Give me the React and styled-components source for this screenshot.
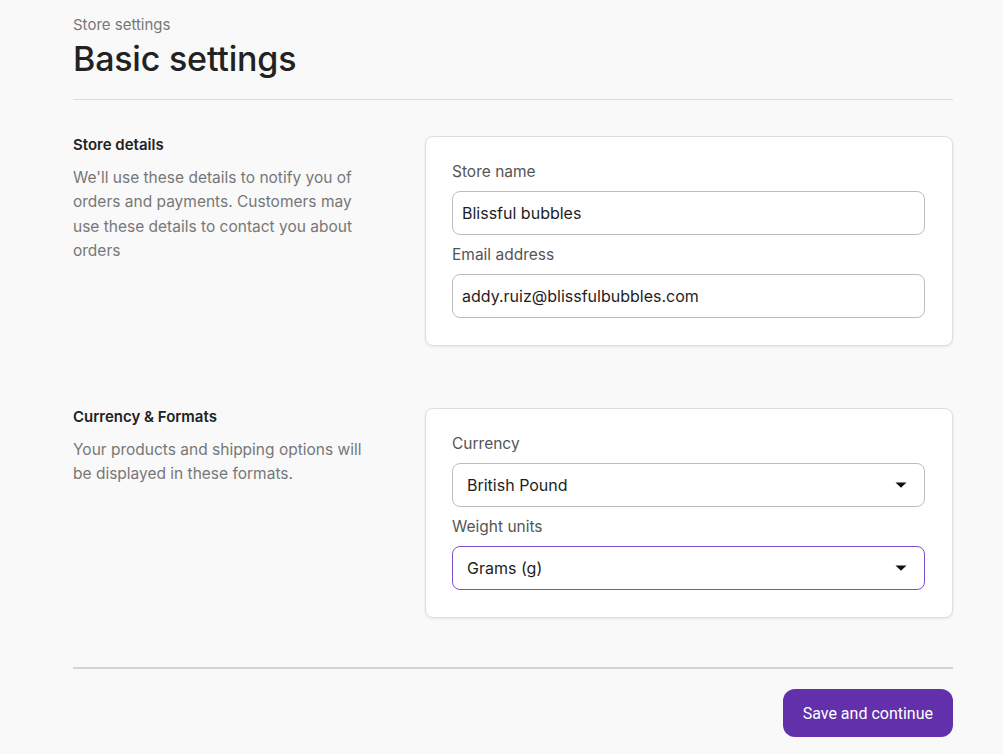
import React from "react";
import styled, { createGlobalStyle } from "styled-components";

const GlobalStyle = createGlobalStyle`
  html, body {
    margin: 0;
    padding: 0;
    background: #f9f9f9;
  }
  body {
    font-family: Inter, "Noto Sans", sans-serif;
    color: #222;
  }
  * { box-sizing: border-box; }
`;

const Page = styled.div`
  width: 880px;
  margin-left: 73px;
  padding-top: 15px;
  padding-bottom: 23px;
`;

const Eyebrow = styled.div`
  font-size: 15px;
  line-height: 20px;
  color: #777;
`;

const Title = styled.h1`
  margin: 2px 0 0;
  font-size: 34px;
  line-height: 44px;
  font-weight: 500;
  letter-spacing: -0.2px;
  color: #222;
`;

const Divider = styled.hr`
  margin: ${({ top }) => top}px 0 0;
  border: none;
  height: ${({ thick }) => (thick ? 2 : 1)}px;
  background: ${({ thick }) => (thick ? "#d4d4d4" : "#dcdcdc")};
`;

const Sections = styled.div`
  display: flex;
  flex-direction: column;
  gap: 62px;
  padding-top: 36px;
`;

const Section = styled.section`
  display: grid;
  grid-template-columns: 352px 1fr;
`;

const Intro = styled.div`
  padding-top: 0;
`;

const SectionTitle = styled.h2`
  margin: 0;
  font-size: 15px;
  line-height: 18px;
  font-weight: 600;
  color: #222;
`;

const SectionText = styled.p`
  margin: 12px 0 0;
  max-width: 290px;
  font-size: 15.5px;
  line-height: 24.3px;
  color: #777;
`;

const Card = styled.div`
  background: #fff;
  border: 1px solid #dedede;
  border-radius: 8px;
  box-shadow: 0 1px 3px rgba(0, 0, 0, 0.08);
  padding: 24px 27px 27px 26px;
  display: flex;
  flex-direction: column;
`;

const Field = styled.label`
  display: flex;
  flex-direction: column;
  margin-top: ${({ first }) => (first ? 0 : 9)}px;
`;

const Label = styled.span`
  font-size: 15.5px;
  line-height: 22px;
  color: #555;
  margin-bottom: 8px;
`;

const Input = styled.input`
  height: 44px;
  width: 100%;
  border: 1px solid #bdbdbd;
  border-radius: 8px;
  padding: 0 9px;
  font-family: Inter, "Noto Sans", sans-serif;
  font-size: 16px;
  color: #1e1e1e;
  background: #fff;
  outline: none;
`;

const SelectBox = styled.div`
  position: relative;
  height: 44px;
  border: 1px solid ${({ focused }) => (focused ? "#7c4fd0" : "#bdbdbd")};
  border-radius: 8px;
  background: #fff;
  display: flex;
  align-items: center;
  padding: 0 14px;
  font-size: 16px;
  color: #1e1e1e;
`;

const SelectValue = styled.span`
  flex: 1;
`;

const Arrow = styled.svg`
  width: 12px;
  height: 6px;
  margin-right: 3px;
`;

const Footer = styled.div`
  display: flex;
  justify-content: flex-end;
  padding-top: 20px;
`;

const Button = styled.button`
  height: 48px;
  padding: 0 20px;
  border: none;
  border-radius: 12px;
  background: #6330ab;
  color: #fff;
  font-family: Roboto, "Liberation Sans", sans-serif;
  font-size: 16px;
  cursor: pointer;
`;

const Select = ({ value, focused }) => (
  <SelectBox focused={focused}>
    <SelectValue>{value}</SelectValue>
    <Arrow viewBox="0 0 12 6">
      <path d="M0.5 0.5 H11.5 L6 5.8 Z" fill="#111" />
    </Arrow>
  </SelectBox>
);

export default function App() {
  return (
    <>
      <GlobalStyle />
      <Page>
        <Eyebrow>Store settings</Eyebrow>
        <Title>Basic settings</Title>
        <Divider top={18} />
        <Sections>
          <Section>
            <Intro>
              <SectionTitle>Store details</SectionTitle>
              <SectionText>
                We'll use these details to notify you of orders and payments.
                Customers may use these details to contact you about orders
              </SectionText>
            </Intro>
            <Card>
              <Field first>
                <Label>Store name</Label>
                <Input defaultValue="Blissful bubbles" />
              </Field>
              <Field>
                <Label>Email address</Label>
                <Input defaultValue="addy.ruiz@blissfulbubbles.com" />
              </Field>
            </Card>
          </Section>
          <Section>
            <Intro>
              <SectionTitle>Currency &amp; Formats</SectionTitle>
              <SectionText>
                Your products and shipping options will be displayed in these
                formats.
              </SectionText>
            </Intro>
            <Card>
              <Field first>
                <Label>Currency</Label>
                <Select value="British Pound" />
              </Field>
              <Field>
                <Label>Weight units</Label>
                <Select value="Grams (g)" focused />
              </Field>
            </Card>
          </Section>
        </Sections>
        <Divider top={49} thick />
        <Footer>
          <Button>Save and continue</Button>
        </Footer>
      </Page>
    </>
  );
}
